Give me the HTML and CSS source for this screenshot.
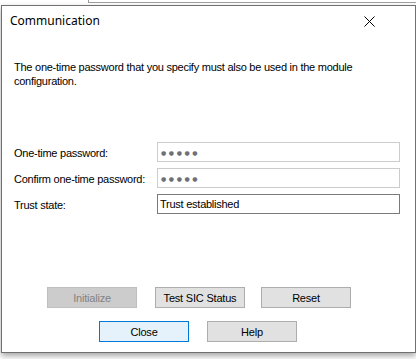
FILE: index.html
```html
<!DOCTYPE html>
<html>
<head>
<meta charset="utf-8">
<link rel="stylesheet" href="styles.css">
</head>
<body>
<div class="backdrop"><div class="behind"></div></div>
<div class="dialog">
  <div class="titlebar">
    <span class="title">Communication</span>
    <span class="close">
      <svg width="11" height="11" viewBox="0 0 11 11"><path d="M0.5 0.5 L10.5 10.5 M10.5 0.5 L0.5 10.5" stroke="#000" stroke-width="1" fill="none"/></svg>
    </span>
  </div>
  <p class="intro">The one-time password that you specify must also be used in the module configuration.</p>
  <div class="form">
    <label class="lbl">One-time password:</label>
    <div class="field light"><span class="dots">●●●●●</span></div>
    <label class="lbl">Confirm one-time password:</label>
    <div class="field light"><span class="dots">●●●●●</span></div>
    <label class="lbl">Trust state:</label>
    <div class="field dark">Trust established</div>
  </div>
  <div class="btnrow row1">
    <button class="btn disabled first">Initialize</button>
    <button class="btn">Test SIC Status</button>
    <button class="btn">Reset</button>
  </div>
  <div class="btnrow row2">
    <button class="btn default">Close</button>
    <button class="btn">Help</button>
  </div>
</div>
</body>
</html>
```
FILE: styles.css
```css
html, body {
  margin: 0;
  padding: 0;
  background: #ffffff;
  width: 416px;
  height: 359px;
  overflow: hidden;
  font-family: "Liberation Sans", Arial, sans-serif;
  font-size: 11px;
  letter-spacing: -0.25px;
  color: #000;
}
.backdrop {
  height: 5px;
}
.behind {
  margin-left: 88px;
  height: 2px;
  border-left: 1px solid #9a9a9a;
  border-bottom: 1px solid #a0a0a0;
}
.dialog {
  margin-left: 1px;
  width: 415px;
  height: 348px;
  box-sizing: border-box;
  border: 1px solid #707070;
  background: #fff;
  box-shadow: 0 3px 6px rgba(0, 0, 0, 0.35);
}
.titlebar {
  height: 30px;
  display: flex;
  align-items: center;
  justify-content: space-between;
  padding-left: 8px;
  padding-right: 40px;
}
.title {
  font-family: "Noto Sans", "Open Sans", sans-serif;
  font-size: 12px;
  line-height: 16px;
  letter-spacing: 0;
}
.close {
  display: flex;
  width: 11px;
  height: 11px;
  margin-top: 1px;
}
.intro {
  margin: 24px 0 0 12px;
  width: 360px;
  line-height: 14px;
}
.form {
  margin: 54px 0 0 12px;
  display: grid;
  grid-template-columns: 143px 243px;
  grid-auto-rows: 20px;
  row-gap: 6px;
  align-items: center;
}
.lbl {
  line-height: 14px;
  padding-top: 1px;
}
.field {
  height: 20px;
  box-sizing: border-box;
  padding-left: 2px;
  line-height: 18px;
  display: flex;
  align-items: center;
}
.field.light { border: 1px solid #cccccc; }
.field.dark { border: 1px solid #7a7a7a; }
.dots {
  font-family: "DejaVu Sans", sans-serif;
  font-size: 6px;
  letter-spacing: 2.6px;
  color: #6d7078;
  padding-left: 1px;
  padding-top: 1px;
}
.btnrow {
  display: flex;
}
.row1 {
  margin: 73px 0 0 45px;
  gap: 16px;
}
.row2 {
  margin: 13px 0 0 97px;
  gap: 18px;
}
.btn {
  width: 90px;
  height: 21px;
  box-sizing: border-box;
  border: 1px solid #adadad;
  background: #e1e1e1;
  font-family: "Liberation Sans", Arial, sans-serif;
  font-size: 11px;
  letter-spacing: -0.2px;
  color: #000;
  padding: 0;
  margin: 0;
}
.btn.first { margin-right: 2px; }
.btn.disabled {
  background: #cccccc;
  border-color: #bfbfbf;
  color: #838383;
}
.btn.default {
  background: #e5f1fb;
  border-color: #0078d7;
}
```
